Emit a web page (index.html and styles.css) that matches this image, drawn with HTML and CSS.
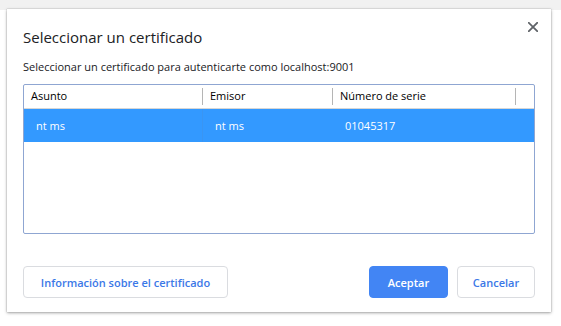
FILE: index.html
```html
<!DOCTYPE html>
<html lang="es">
<head>
<meta charset="utf-8">
<link rel="stylesheet" href="styles.css">
</head>
<body>
<div class="topbar"></div>
<div class="stage">
  <div class="dialog">
    <button class="close" aria-label="Cerrar">
      <svg width="10" height="10" viewBox="0 0 10 10"><path d="M0.8 0.8L9.2 9.2M9.2 0.8L0.8 9.2" stroke="#5f6368" stroke-width="1.8" stroke-linecap="square"/></svg>
    </button>
    <h1 class="title">Seleccionar un certificado</h1>
    <p class="subtitle">Seleccionar un certificado para autenticarte como localhost:9001</p>
    <div class="table">
      <div class="row head">
        <div class="cell c1">Asunto</div>
        <div class="cell c2">Emisor</div>
        <div class="cell c3">Número de serie</div>
        <div class="cell c4"></div>
      </div>
      <div class="row sel">
        <div class="cell c1">nt ms</div>
        <div class="cell c2">nt ms</div>
        <div class="cell c3">01045317</div>
      </div>
    </div>
    <div class="actions">
      <button class="btn info">Información sobre el certificado</button>
      <div class="spacer"></div>
      <button class="btn primary">Aceptar</button>
      <button class="btn cancel">Cancelar</button>
    </div>
  </div>
</div>
</body>
</html>
```
FILE: styles.css
```css
html, body {
  margin: 0;
  padding: 0;
  background: #ffffff;
  width: 561px;
  height: 326px;
  overflow: hidden;
  font-family: "Open Sans", "Noto Sans", sans-serif;
}
.topbar {
  height: 10px;
  background: #f1f1f1;
}
.stage {
  padding-left: 7px;
}
.dialog {
  position: relative;
  width: 544px;
  height: 303px;
  box-sizing: border-box;
  background: #fff;
  margin-top: -1px;
  box-shadow: 0 1px 3px rgba(0,0,0,0.35), 0 0 1px rgba(0,0,0,0.3);
  padding: 0 16px 0 16px;
  display: flex;
  flex-direction: column;
}
.close {
  position: absolute;
  top: 11px;
  right: 11px;
  width: 14px;
  height: 14px;
  padding: 0;
  border: 0;
  background: none;
  display: flex;
  align-items: center;
  justify-content: center;
}
.title {
  margin: 17px 0 0 0;
  font-size: 15px;
  font-weight: 400;
  color: #202124;
  line-height: 22px;
}
.subtitle {
  margin: 11px 0 0 0;
  font-size: 11px;
  color: #202124;
  line-height: 16px;
}
.table {
  margin-top: 9px;
  width: 512px;
  height: 150px;
  box-sizing: border-box;
  border: 1px solid #8fa6d2;
  border-radius: 2px;
  font-size: 11px;
}
.row {
  display: flex;
}
.cell {
  box-sizing: border-box;
}
.head {
  height: 24px;
  border-bottom: 1px solid #d6d6d6;
  box-sizing: border-box;
  color: #000;
}
.head .cell {
  padding-left: 7px;
  margin: 3px 0;
  line-height: 16px;
}
.head .c1, .head .c2, .head .c3 {
  border-right: 1px solid #b5b5b5;
}
.c1 { width: 179px; }
.c2 { width: 130px; }
.c3 { width: 183px; }
.c4 { flex: 1; }
.sel {
  background: #3399ff;
  color: #fff;
  height: 33px;
  align-items: center;
}
.sel .cell {
  padding-left: 12px;
}
.sel .c1 { border-right: 1px solid #3a95f2; height: 33px; line-height: 33px; }
.actions {
  margin-top: 32px;
  display: flex;
  gap: 9px;
}
.spacer { flex: 1; }
.btn {
  height: 32px;
  box-sizing: border-box;
  border: 1px solid #dadce0;
  border-radius: 4px;
  background: #fff;
  color: #3b78e7;
  font-family: "Open Sans", "Noto Sans", sans-serif;
  font-size: 11px;
  font-weight: 600;
  padding: 0;
}
.btn.info { width: 205px; }
.btn.primary {
  background: #4285f4;
  border-color: #4285f4;
  color: #fff;
  width: 79px;
}
.btn.cancel { width: 78px; }
```
